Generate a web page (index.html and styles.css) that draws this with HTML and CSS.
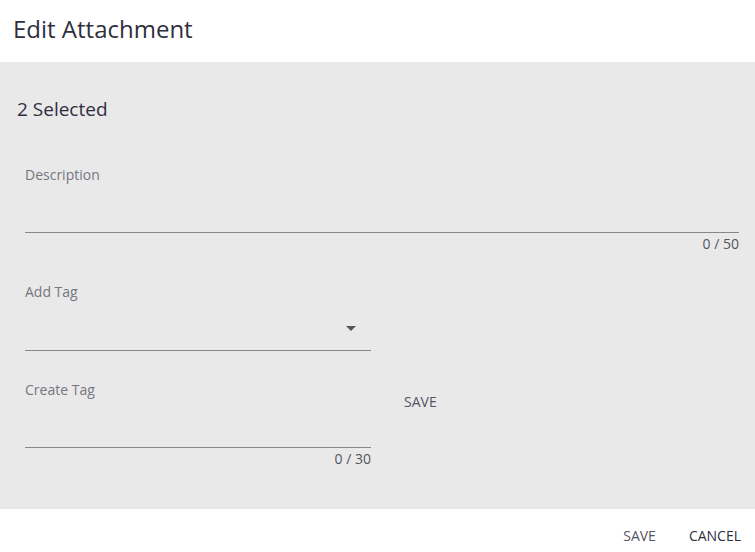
FILE: index.html
```html
<!DOCTYPE html>
<html>
<head>
<meta charset="utf-8">
<link rel="stylesheet" href="styles.css">
</head>
<body>
<div class="dialog">
  <header class="title-bar"><h1 class="title">Edit Attachment</h1></header>
  <main class="content">
    <h2 class="selected">2 Selected</h2>
    <div class="field field-wide">
      <label class="label">Description</label>
      <div class="input"></div>
      <div class="counter">0 / 50</div>
    </div>
    <div class="field field-narrow field-select">
      <label class="label">Add Tag</label>
      <div class="input select"><span class="arrow"></span></div>
    </div>
    <div class="create-row">
      <div class="field field-narrow">
        <label class="label">Create Tag</label>
        <div class="input"></div>
        <div class="counter">0 / 30</div>
      </div>
      <button class="btn btn-inline">SAVE</button>
    </div>
  </main>
  <footer class="actions">
    <button class="btn">SAVE</button>
    <button class="btn btn-dark">CANCEL</button>
  </footer>
</div>
</body>
</html>
```
FILE: styles.css
```css
* { box-sizing: border-box; }
html, body { margin: 0; padding: 0; background: #fff; }
body { font-family: "Open Sans", "Noto Sans", sans-serif; color: #2f2f3f; width: 755px; height: 552px; overflow: hidden; }
.dialog { display: flex; flex-direction: column; height: 552px; }
.title-bar { height: 62px; padding: 13px 0 0 13px; }
.title { margin: 0; font-size: 24px; font-weight: 400; line-height: 32px; color: #2f2f40; }
.content { background: #e9e9ea; height: 447px; padding: 0 16px 0 25px; }
.selected { margin: 33px 0 0 -8px; font-size: 19px; font-weight: 400; line-height: 28px; color: #2f2f40; }
.field { display: flex; flex-direction: column; }
.field-wide { margin-top: 40px; }
.label { font-size: 14px; line-height: 19px; padding-top: 2px; color: #76767e; }
.input { height: 49px; border-bottom: 1px solid #86868f; position: relative; }
.counter { font-size: 14px; line-height: 19px; padding-top: 1px; color: #55555f; text-align: right; }
.field-narrow { width: 346px; }
.field-select { margin-top: 27px; }
.select { height: 50px; }
.arrow { position: absolute; right: 15px; top: 25px; width: 0; height: 0; border-left: 5px solid transparent; border-right: 5px solid transparent; border-top: 5px solid #55555e; }
.create-row { display: flex; align-items: flex-start; margin-top: 27px; }
.btn { background: none; border: none; padding: 0; font-family: inherit; font-size: 14px; line-height: 19px; color: #55555f; cursor: pointer; }
.btn-inline { margin: 14px 0 0 33px; }
.actions { display: flex; justify-content: flex-end; gap: 33px; padding: 17px 14px 0 0; }
.btn-dark { color: #2f2f40; }
```
